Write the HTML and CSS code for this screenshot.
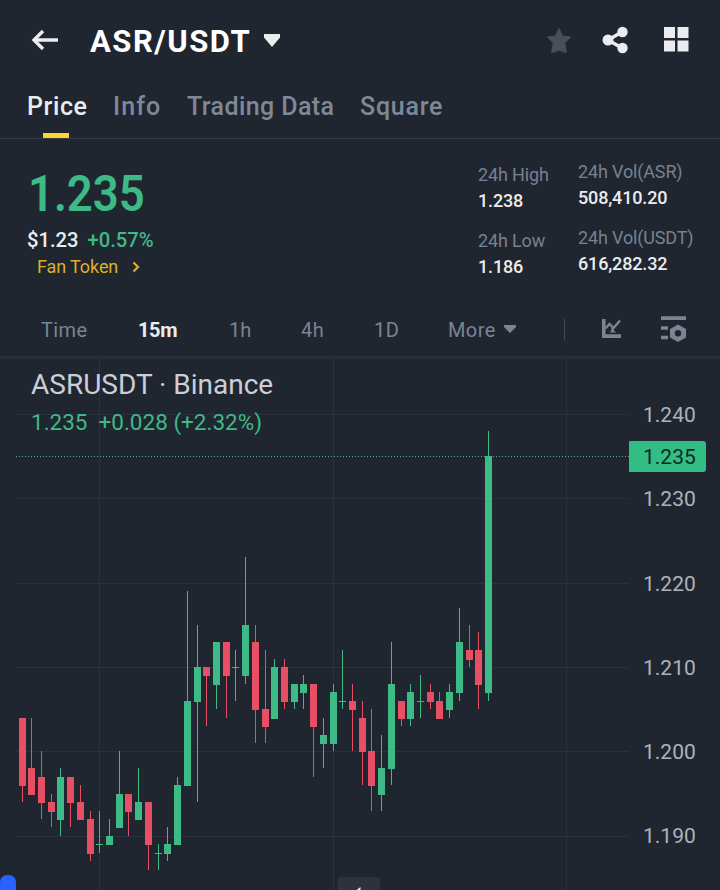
FILE: index.html
```html
<!DOCTYPE html>
<html lang="en">
<head>
<meta charset="utf-8">
<title>ASR/USDT</title>
<link rel="stylesheet" href="styles.css">
</head>
<body>
<header class="topbar">
  <svg class="back" width="28" height="22" viewBox="0 0 28 22"><path d="M27 11H3M12 2L3 11l9 9"/></svg>
  <h1 class="pair">ASR/USDT</h1>
  <svg class="pair-caret" width="16" height="13" viewBox="0 0 16 13"><path d="M0 0h16v3.500L8 13 0 3.500z"/></svg>
  <div class="actions">
    <svg width="26" height="27" viewBox="0 0 26 27"><path class="star" d="M13 1.500l3.600 7.500 8 1.100-5.900 5.900 1.700 9.200h-2L13 23l-5.400 2.200h-2L7.300 16l-5.900-5.900 8-1.100z"/></svg>
    <svg width="26" height="28" viewBox="0 0 26 28"><path class="share-line" d="M20 6L6 14l14 8"/><g class="light"><circle cx="6" cy="14" r="5.500"/><circle cx="20.500" cy="6" r="5.200"/><circle cx="20.500" cy="22" r="5.200"/></g></svg>
    <svg width="25" height="25" viewBox="0 0 25 25"><path class="light" d="M0 0h11v11H0zM13.500 0h11v11h-11zM0 13.500h11v11H0zM13.500 13.500h11v11h-11z"/></svg>
  </div>
</header>
<nav class="tabs">
  <span class="tab tab-active">Price</span>
  <span class="tab tab-info">Info</span>
  <span class="tab tab-data">Trading Data</span>
  <span class="tab tab-square">Square</span>
</nav>
<section class="summary">
  <div class="quote">
    <div class="last">1.235</div>
    <div class="fiat"><span class="usd">$1.23</span><span class="change">+0.57%</span></div>
    <div class="tag"><span>Fan Token</span><svg width="8" height="12" viewBox="0 0 8 12"><path d="M1.500 1.500L6 6l-4.500 4.500"/></svg></div>
  </div>
  <dl class="stats stats-price">
    <dt class="k-high">24h High</dt><dd>1.238</dd>
    <dt class="k-low">24h Low</dt><dd>1.186</dd>
  </dl>
  <dl class="stats stats-volume">
    <dt class="k-asr">24h Vol(ASR)</dt><dd>508,410.20</dd>
    <dt class="k-usdt">24h Vol(USDT)</dt><dd>616,282.32</dd>
  </dl>
</section>
<div class="intervals">
  <span class="iv iv-time">Time</span>
  <span class="iv iv-15m">15m</span>
  <span class="iv iv-1h">1h</span>
  <span class="iv iv-4h">4h</span>
  <span class="iv iv-1d">1D</span>
  <span class="iv iv-more">More</span>
  <svg class="more-caret" width="12" height="8" viewBox="0 0 12 8"><path d="M0 0h12v2L6 8 0 2z"/></svg>
  <i class="divider"></i>
  <svg class="chart-icon" width="20" height="20" viewBox="0 0 20 20"><path class="thick" d="M1.700 0v17.200H19"/><path class="thin" d="M3.500 9.500l4-4.500 4 4L18 1.500M10.500 9v3"/><path class="hex" d="M7.500 13.500l3.300-3 3.300 3z"/></svg>
  <svg class="settings-icon" width="25" height="26" viewBox="0 0 25 26"><path class="thick" d="M0 2.200h25M0 12h7M0 21.500h7"/><path class="hex" fill-rule="evenodd" d="M17 8.500l8 4.500v8.500L17 26l-8-4.500V13zM17 14a3.200 3.200 0 1 0 0 6.400 3.200 3.200 0 0 0 0-6.400z"/></svg>
</div>
<main class="chart">
  <svg class="plot" width="720" height="532" viewBox="0 358 720 532">
    <path class="grid" d="M99.500 358V890M333.500 358V890M566.500 358V890M16 414.500H629M16 498.500H629M16 583.500H629M16 667.500H629M16 751.500H629M16 836.500H629"/>
    <path class="price-line" d="M16 456.500H629"/>
    <path class="wick down" d="M22.500 718V802M31.500 718V795M41.500 751V819M51.500 794V827M70.500 777V827M80.500 785V820M90.500 811V861M128.500 794V836M148.500 802V870M206.500 667V726M226.500 642V718M255.500 625V743M265.500 650V743M284.500 659V709M313.500 684V777M352.500 684V751M362.500 701V785M371.500 709V811M401.500 701V726M430.500 684V709M439.500 692V719M469.500 625V667M478.500 632V709"/>
    <path class="wick up" d="M60.500 768V836M99.500 811V853M96 844.500H103M109.500 819V845M119.500 751V828M138.500 768V820M158.500 844V870M155 853.500H162M167.500 827V861M177.500 777V845M187.500 591V786M197.500 625V802M216.500 642V709M235.500 650V701M232 667.500H239M245.500 557V684M274.500 659V719M294.500 684V709M303.500 675V709M323.500 718V768M333.500 684V751M342.500 650V709M339 701.500H346M381.500 735V811M391.500 642V785M410.500 684V726M420.500 675V718M417 701.500H424M449.500 684V718M459.500 608V701M488.500 431V701"/>
    <path class="body down" d="M22.500 718V786M31.500 768V795M41.500 777V803M51.500 802V812M70.500 777V803M80.500 802V820M90.500 819V854M128.500 794V812M148.500 802V845M206.500 667V676M226.500 642V676M255.500 642V710M265.500 709V727M284.500 667V702M313.500 684V727M352.500 701V710M362.500 718V752M371.500 751V786M401.500 701V719M430.500 692V702M439.500 701V719M469.500 650V660M478.500 650V685"/>
    <path class="body up" d="M60.500 777V820M109.500 836V845M119.500 794V828M138.500 802V820M167.500 844V854M177.500 785V845M187.500 701V786M197.500 667V702M216.500 642V685M245.500 625V676M274.500 667V719M294.500 684V702M303.500 684V693M323.500 735V744M333.500 692V744M381.500 768V795M391.500 684V769M410.500 692V719M449.500 692V710M459.500 642V693M488.500 456V693"/>
    <rect class="handle" x="0" y="875" width="16" height="30" rx="7"/>
    <rect class="chip" x="338" y="877" width="42" height="30" rx="4"/>
    <path class="chip-arrow" d="M354 892l6.500-5v5z"/>
  </svg>
  <div class="legend">
    <div class="legend-name">ASRUSDT · Binance</div>
    <div class="legend-value"><span>1.235</span><span>+0.028 (+2.32%)</span></div>
  </div>
  <div class="axis">
    <span>1.240</span><span>1.230</span><span>1.220</span><span>1.210</span><span>1.200</span><span>1.190</span>
  </div>
  <div class="price-badge">1.235</div>
</main>
</body>
</html>
```

FILE: styles.css
```css
* { box-sizing: border-box; }
body {
  margin: 0;
  width: 720px;
  height: 890px;
  overflow: hidden;
  background: #202630;
  color: #eaecef;
  font-family: Roboto, "Liberation Sans", sans-serif;
}
svg { display: block; flex: none; }
span, div, dt, dd, h1 { white-space: nowrap; }

.topbar { display: flex; align-items: center; height: 80px; padding-left: 31px; }
.back { fill: none; stroke: #eaecef; stroke-width: 3.4; }
.pair { margin: 3px 0 0 31px; width: 174px; font-size: 31px; line-height: 40px; font-weight: 700; letter-spacing: 1.5px; color: #fff; }
.pair-caret { fill: #eaecef; }
.actions { display: flex; align-items: center; margin-left: auto; padding-right: 31px; }
.actions svg:nth-child(2) { margin: -1px 36px 0 30px; }
.actions svg:nth-child(3) { margin-top: -1px; }
.star { fill: #474f5c; stroke: #474f5c; stroke-width: 1; stroke-linejoin: round; }
.light { fill: #eaecef; }
.share-line { fill: none; stroke: #eaecef; stroke-width: 3.5; }

.tabs { display: flex; height: 59px; padding-left: 27px; border-bottom: 1px solid #333b47; font-size: 25px; line-height: 54px; font-weight: 500; color: #7f8896; letter-spacing: .6px; }
.tab { margin-right: 27px; }
.tab-active { position: relative; width: 59px; color: #eaecef; }
.tab-active::after { content: ""; position: absolute; left: 16px; top: 53px; width: 26px; height: 5px; background: #fcd535; }
.tab-info { width: 47px; letter-spacing: 1.1px; }
.tab-data { width: 146px; letter-spacing: .4px; }
.tab-square { letter-spacing: .75px; }

.summary { display: flex; height: 164px; padding-left: 27px; }
.quote { width: 451px; }
.last { margin-top: 27px; padding-left: 1px; height: 56px; width: 130px; font-size: 50px; line-height: 56px; font-weight: 600; color: #3dba86; transform: scaleX(.91); transform-origin: 0 50%; }
.fiat { display: flex; gap: 9px; margin-top: 5px; font-size: 20.2px; line-height: 26px; font-weight: 500; }
.change { color: #3dba86; }
.tag { display: flex; align-items: center; gap: 14px; padding-left: 10px; font-size: 18px; line-height: 27px; color: #dfae2b; letter-spacing: -.1px; }
.tag path { fill: none; stroke: #dfae2b; stroke-width: 2.2; }
.stats { margin: 22px 0 0; }
.stats-price { width: 100px; margin-top: 25px; }
.stats dt { height: 22px; font-size: 18px; line-height: 22px; color: #78818f; letter-spacing: -.15px; }
.stats dd { margin: 2px 0 16px; height: 26px; font-size: 18px; line-height: 26px; font-weight: 500; color: #eaecef; letter-spacing: -.15px; }

.intervals { display: flex; align-items: center; height: 56px; padding-left: 41px; border-bottom: 3px solid #272e38; font-size: 20px; color: #7b8492; letter-spacing: .4px; }
.iv-time { width: 97px; }
.iv-15m { width: 91px; font-weight: 700; color: #eaecef; letter-spacing: -.4px; }
.iv-1h { width: 72px; letter-spacing: 0; }
.iv-4h { width: 73px; }
.iv-1d { width: 74px; }
.iv-more { width: 56px; }
.more-caret { fill: #7b8492; margin-top: -2px; }
.divider { width: 1px; height: 21px; margin: 0 37px 0 48px; background: #424a56; }
.chart-icon { margin-top: -1px; }
.thick { fill: none; stroke: #7b8492; stroke-width: 3.7; }
.thin { fill: none; stroke: #7b8492; stroke-width: 2.4; }
.settings-icon { margin-left: 39px; margin-top: -1px; }
.hex { fill: #7b8492; }

.chart { position: relative; height: 531px; }
.plot { margin-top: -1px; }
.grid { fill: none; stroke: #2a313c; stroke-width: 1; }
.price-line { stroke: #3dba86; stroke-width: 1; stroke-dasharray: 1 2; }
.wick { fill: none; stroke-width: 1; }
.body { fill: none; stroke-width: 7; }
.up { stroke: #3dba86; }
.down { stroke: #e84f65; }
.handle { fill: #2962ff; }
.chip { fill: #2d323d; }
.chip-arrow { fill: #eaecef; }
.legend { position: absolute; left: 31px; top: 9px; }
.legend-name { font-size: 28px; line-height: 36px; color: #cbced6; }
.legend-value { display: flex; gap: 11px; margin-top: 3px; font-size: 22.500px; line-height: 32px; color: #3dba86; }
.axis { position: absolute; left: 643px; top: 42px; display: grid; grid-auto-rows: 84.300px; font-size: 21px; line-height: 30px; color: #aeb2bb; }
.price-badge { position: absolute; left: 629px; top: 83px; width: 77px; height: 31px; padding-left: 14px; border-radius: 1px 3px 3px 1px; background: #32bd85; font-size: 21px; line-height: 32px; color: #0d2a1e; }
```
